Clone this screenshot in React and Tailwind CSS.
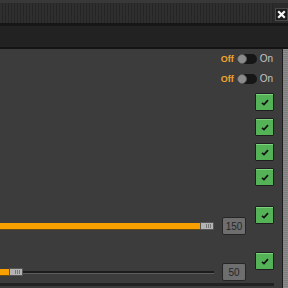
import React from "react";

function Toggle() {
  return (
    <div className="flex items-center justify-end h-[20px] gap-[3px]">
      <span className="text-[9px] font-bold text-[#eea52f] leading-none">Off</span>
      <div className="w-[20px] h-[10px] rounded-full bg-[#161616] relative">
        <div className="absolute left-0 top-0 w-[10px] h-[10px] rounded-full bg-[#8c8c8c] border border-[#5a5a5a]" />
      </div>
      <span className="text-[10px] text-[#c4c4c4] leading-none mr-[1px]">On</span>
    </div>
  );
}

function Check() {
  return (
    <div className="w-[19px] h-[18px] bg-[#54b357] border border-[#1e1e1e] rounded-[1px] flex items-center justify-center shadow-[inset_0_1px_0_#7fd07f]">
      <svg width="8" height="7" viewBox="0 0 8 7">
        <path d="M1 3.8 L3 5.6 L7 1.2" fill="none" stroke="#141414" strokeWidth="1.8" />
      </svg>
    </div>
  );
}

function Handle() {
  return (
    <div className="w-[14px] h-[8px] bg-[#b4b4b4] border border-[#555] rounded-[1px] flex items-center justify-end gap-[1px] pr-[2px] shrink-0">
      <div className="w-[1px] h-[4px] bg-[#777]" />
      <div className="w-[1px] h-[4px] bg-[#777]" />
      <div className="w-[1px] h-[4px] bg-[#777]" />
    </div>
  );
}

function ValueBox({ value }) {
  return (
    <div className="w-[24px] h-[18px] bg-[#6e6e6e] border border-[#262626] rounded-[2px] flex items-center justify-center text-[10px] text-[#262626] shrink-0">
      {value}
    </div>
  );
}

function SliderRow({ pct, value }) {
  return (
    <div className="flex items-start">
      <div className="flex-1 flex items-start mt-[11px]">
        <div className="flex-1 flex items-center">
          <div className="flex-1 h-[18px] flex items-center">
            <div className="w-full flex items-center">
              <div
                className="h-[7px] bg-[#f7a000] border-b border-[#6b4a10] shrink-0"
                style={{ width: pct }}
              />
              <Handle />
              <div className="flex-1 flex flex-col">
                <div className="h-[2px] bg-[#1c1c1c]" />
                <div className="h-[1px] bg-[#5c5c5c]" />
              </div>
            </div>
          </div>
          <div className="w-[8px]" />
          <ValueBox value={value} />
        </div>
      </div>
      <div className="ml-[9px]">
        <Check />
      </div>
    </div>
  );
}

export default function App() {
  return (
    <div
      className="w-[288px] h-[288px] overflow-hidden bg-[#3c3c3c] flex flex-col"
      style={{ fontFamily: '"Liberation Sans", Arial, sans-serif' }}
    >
      <div className="h-[23px] bg-[#363636] flex flex-col shrink-0">
        <div className="h-[3px] bg-[#383838]" />
        <div className="flex-1 flex">
          <div className="flex-1 bg-[repeating-linear-gradient(90deg,#2f2f2f_0px,#2f2f2f_2px,#252525_2px,#252525_3px)]" />
          <div className="w-[2px] bg-[#2b2b2b]" />
          <div className="w-[13px] flex items-center pt-[2px] bg-[#2b2b2b]">
            <div className="w-[13px] h-[13px] bg-[#1b1b1b] border border-[#4a4a4a] flex items-center justify-center">
              <svg width="9" height="9" viewBox="0 0 9 9">
                <path d="M1.2 1.2 L7.8 7.8 M7.8 1.2 L1.2 7.8" stroke="#f4f4f4" strokeWidth="2.2" />
              </svg>
            </div>
          </div>
        </div>
      </div>
      <div className="h-[3px] bg-[#161616] shrink-0" />
      <div className="h-[21px] bg-[#222222] shrink-0" />
      <div className="h-[2px] bg-[#141414] shrink-0" />
      <div className="flex-1 flex min-h-0">
        <div className="flex-1 pr-[8px] flex flex-col">
          <Toggle />
          <Toggle />
          <div className="flex justify-end mt-[4px]"><Check /></div>
          <div className="flex justify-end mt-[7px]"><Check /></div>
          <div className="flex justify-end mt-[7px]"><Check /></div>
          <div className="flex justify-end mt-[7px]"><Check /></div>
          <div className="mt-[20px]">
            <SliderRow pct="200px" value="150" />
          </div>
          <div className="mt-[17px]">
            <SliderRow pct="9px" value="50" />
          </div>
          <div className="mt-[2px] h-[3px] bg-[#222]" />
        </div>
        <div className="w-[1px] bg-[#1c1c1c]" />
        <div className="w-[5px] bg-[repeating-linear-gradient(0deg,#8e8e8e_0px,#8e8e8e_1px,#7c7c7c_1px,#7c7c7c_2px)]" />
      </div>
    </div>
  );
}
